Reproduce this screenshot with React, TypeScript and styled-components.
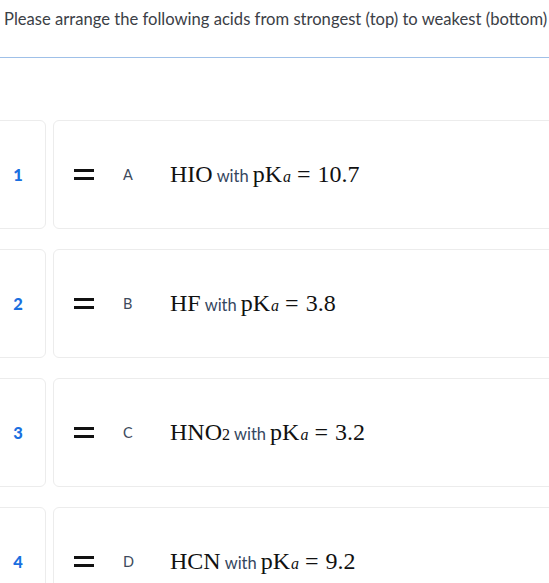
import React from "react";
import styled, { createGlobalStyle } from "styled-components";

const Global = createGlobalStyle`
  html, body { margin: 0; padding: 0; background: #fff; overflow: hidden; }
  body { font-family: "Lato", "Liberation Sans", sans-serif; }
`;

const Page = styled.div`
  width: 549px;
  height: 583px;
  overflow: hidden;
`;

const Prompt = styled.div`
  padding: 7px 0 0 4px;
  height: 58px;
  box-sizing: border-box;
  font-size: 16.6px;
  line-height: 24px;
  color: #3b4046;
  white-space: nowrap;
  border-bottom: 1px solid #9fc0e8;
`;

const List = styled.div`
  display: flex;
  flex-direction: column;
  gap: 20px;
  padding-top: 62px;
`;

const Row = styled.div`
  display: flex;
  gap: 7px;
  height: 109px;
  flex-shrink: 0;
`;

const Rank = styled.div`
  flex: 0 0 56px;
  margin-left: -10px;
  box-sizing: border-box;
  border: 1px solid #ececec;
  border-radius: 6px;
  display: flex;
  align-items: center;
  justify-content: center;
  color: #1a6fe0;
  font-weight: 900;
  font-size: 16.5px;
`;

const Item = styled.div`
  flex: 0 0 520px;
  box-sizing: border-box;
  border: 1px solid #ececec;
  border-radius: 6px;
  display: flex;
  align-items: center;
  padding-left: 20px;
`;

const Handle = styled.div`
  width: 20px;
  height: 11px;
  display: flex;
  flex-direction: column;
  justify-content: space-between;
  margin-right: 29px;
  &::before, &::after {
    content: "";
    height: 3px;
    background: #111;
  }
`;

const Letter = styled.span`
  width: 47px;
  font-family: "Lato", "Liberation Sans", sans-serif;
  font-size: 14.5px;
  color: #3d4a5c;
`;

const Formula = styled.span`
  display: inline-flex;
  align-items: baseline;
  font-family: "Liberation Serif", serif;
  font-size: 24px;
  color: #111;
  white-space: nowrap;
`;

const Word = styled.span`
  font-family: "Lato", "Liberation Sans", sans-serif;
  font-size: 16.5px;
  color: #34465e;
  margin: 0 4px 0 4px;
`;

const Sub = styled.sub`
  font-size: 16px;
  vertical-align: -4px;
  line-height: 0;
`;

const SubItalic = styled(Sub)`
  font-style: italic;
  margin-left: 1px;
`;

const Eq = styled.span`
  margin: 0 7px 0 6px;
`;

type Acid = { rank: number; letter: string; name: React.ReactNode; pka: string };

const acids: Acid[] = [
  { rank: 1, letter: "A", name: <>HIO</>, pka: "10.7" },
  { rank: 2, letter: "B", name: <>HF</>, pka: "3.8" },
  { rank: 3, letter: "C", name: <>HNO<Sub>2</Sub></>, pka: "3.2" },
  { rank: 4, letter: "D", name: <>HCN</>, pka: "9.2" },
];

export default function App() {
  return (
    <Page>
      <Global />
      <Prompt>Please arrange the following acids from strongest (top) to weakest (bottom)</Prompt>
      <List>
        {acids.map((a) => (
          <Row key={a.rank}>
            <Rank>{a.rank}</Rank>
            <Item>
              <Handle />
              <Letter>{a.letter}</Letter>
              <Formula>
                {a.name}
                <Word>with</Word>
                pK<SubItalic>a</SubItalic>
                <Eq>=</Eq>
                {a.pka}
              </Formula>
            </Item>
          </Row>
        ))}
      </List>
    </Page>
  );
}
